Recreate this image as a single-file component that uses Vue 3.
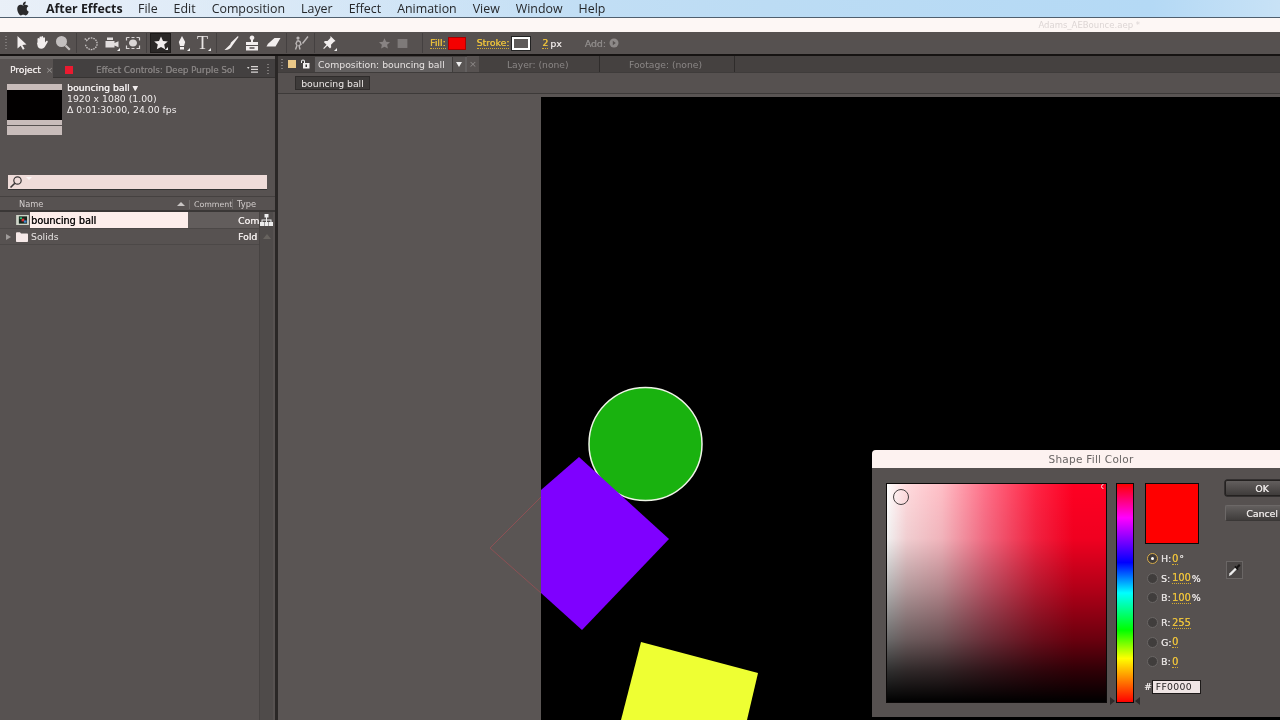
<script setup>
const menus = ['File', 'Edit', 'Composition', 'Layer', 'Effect', 'Animation', 'View', 'Window', 'Help']
const I = {
  arrow: { f: 'M4.500 1v12.500l3.200-2.800 2.200 4 1.700-.9-2.200-3.900 4.100-.4z' },
  hand: { f: 'M3.500 7.500V4c0-1.200 1.500-1.200 1.700 0l.3-1.500c0-1.300 1.700-1.300 1.800 0v-.5c.1-1.300 1.800-1.200 1.800 0l.2 1c.2-1.100 1.700-1 1.700.2v4.300l1-1.300c.9-1 2.300 0 1.600 1l-2.400 4c-.8 1.500-1.900 2.500-3.800 2.500-2.500 0-3.700-1.400-3.900-3.200L3 8z' },
  zoom: { s: 'M10.500 10.500l4.300 4.300', f: 'M6.500 1a5.500 5.500 0 1 1 0 11 5.500 5.500 0 0 1 0-11z', sw: 2.200, op: .7 },
  rotate: { s: 'M3.500 5.500a5.800 5.800 0 1 1-1 3.500M1.800 3.500l1.700 2.200 2.300-1.500', dash: '1.500 1', sw: 1.300, op: .75 },
  camera: { f: 'M1.500 6h9v2l4-1.800v6l-4-1.800v2h-9zM3 2.500h6v2.500H3z', op: .9, c: true },
  behind: { s: 'M1.500 2.500h3M11.500 2.500h3M1.500 2.500v3M14.500 2.500v3M1.500 10.500v3h3M14.500 10.500v3h-3M6.500 2.500h3M6.500 13.500h3', f: 'M8 4.500c2.500 0 4 1.600 4 3.500s-1.500 3.500-4 3.500S4 9.900 4 8s1.500-3.500 4-3.500z', sw: 1.200, op: .85 },
  star: { f: 'M8 1.500l2 4.400 4.800.5-3.600 3.200 1 4.700L8 11.900l-4.200 2.400 1-4.700L1.200 6.400 6 5.900z', c: true },
  pen: { f: 'M8 1l3.200 6-1.200 4H6L4.800 7zM6 12h4v2.500H6z', c: true },
  brush: { f: 'M15 1L8 7.500l-.8 2L1.500 15c2.800.3 6.300-1 7.500-4L15.500 2z' },
  stamp: { f: 'M8 .5a2.300 2.300 0 0 1 1 4.400V7h5v3H2V7h5V4.900A2.300 2.300 0 0 1 8 .5zM2 11h12v4.500H2zM5.500 12.300v1.500h5v-1.500z' },
  eraser: { f: 'M9.500 3h6l-5 8.500H1.500L3 8.800z' },
  roto: { s: 'M4.500 5.500l-1.500 3 1 2-1.500 4M4.500 5.500l2.500 1 1 3-2 1 1 4M15 1.500l-5.500 7', f: 'M5 1.500a1.600 1.600 0 1 1 0 3.200 1.600 1.600 0 0 1 0-3.200z', sw: 1.400, op: .65 },
  pin: { f: 'M9.500 1l5 5-1.500.8-3 3 .2 2.500-1.200 1.200-2.700-2.800L3 14l-.8-.8 3.300-3.400L2.800 7.100 4 5.900l2.500.2 2.900-3z', c: true },
  starDim: { f: 'M8 1.500l2 4.400 4.800.5-3.600 3.200 1 4.700L8 11.900l-4.200 2.400 1-4.700L1.200 6.400 6 5.900z', op: .32 },
  boxDim: { f: 'M2 2.500h12v11H2z', op: .26 }
}
const groups = [
  [I.arrow, I.hand, I.zoom],
  [I.rotate, I.camera, I.behind],
  [{ ...I.star, sel: true }, I.pen, { t: 'T', c: true }],
  [I.brush, I.stamp, I.eraser],
  [I.roto],
  [I.pin]
]
const hsb = [
  { k: 'H:', v: '0', u: '°', on: true, cls: 'f-h' },
  { k: 'S:', v: '100', u: '%', cls: 'f-s' },
  { k: 'B:', v: '100', u: '%', cls: 'f-b' },
  { k: 'R:', v: '255', u: '', cls: 'f-r' },
  { k: 'G:', v: '0', u: '', cls: 'f-g' },
  { k: 'B:', v: '0', u: '', cls: 'f-b2' }
]
</script>

<template>
  <div class="app">
    <header class="menubar">
      <svg class="apple" viewBox="0 0 16 16"><path d="M11.180 0C9.900.1 8.800.9 8.300 1.800c-.5.800-.6 1.700-.5 2.300 1.200.1 2.300-.6 2.800-1.500.5-.8.700-1.700.6-2.600zM14.500 11.700c-1.500-.7-2.200-1.900-2.200-3.300 0-1.300.7-2.300 1.800-3-.7-1-1.800-1.500-3-1.600-1.300-.1-2.400.7-3 .7-.7 0-1.700-.7-2.900-.7C3.300 3.800 1.400 5.400 1.400 8.400c0 3.100 2.200 7.500 4.200 7.500 1 0 1.400-.7 2.700-.7s1.600.7 2.700.7c1.700 0 3-2.500 3.500-4.200z"/></svg>
      <strong class="app-name">After Effects</strong>
      <span v-for="m in menus" :key="m" class="menu">{{ m }}</span>
    </header>
    <div class="titlebar"><span>Adams_AEBounce.aep *</span></div>

    <div class="toolbar">
      <i class="grip"></i>
      <template v-for="(g, gi) in groups" :key="gi">
        <i v-if="gi" class="sep"></i>
        <div v-for="(t, ti) in g" :key="ti" class="tool" :class="{ sel: t.sel, corner: t.c }">
          <span v-if="t.t" class="tool-t">{{ t.t }}</span>
          <svg v-else viewBox="0 0 16 16" :style="{ opacity: t.op || 1 }">
            <path v-if="t.f" :d="t.f" fill="#f2eeee"/>
            <path v-if="t.s" :d="t.s" fill="none" stroke="#f2eeee" :stroke-width="t.sw" :stroke-dasharray="t.dash"/>
          </svg>
        </div>
      </template>
      <div class="dim">
        <div class="tool dimtool"><svg viewBox="0 0 16 16" :style="{ opacity: I.starDim.op }"><path :d="I.starDim.f" fill="#f2eeee"/></svg></div>
        <div class="tool dimtool"><svg viewBox="0 0 16 16" :style="{ opacity: I.boxDim.op }"><path :d="I.boxDim.f" fill="#f2eeee"/></svg></div>
      </div>
      <i class="sep sep-fill"></i>
      <span class="link">Fill:</span>
      <i class="fill-swatch"></i>
      <span class="link stroke-l">Stroke:</span>
      <i class="stroke-swatch"></i>
      <span class="link px-v">2</span><span class="px-u">px</span>
      <span class="add">Add:</span>
      <svg class="add-i" viewBox="0 0 10 10"><circle cx="5" cy="5" r="4.500" fill="#8d8988"/><path d="M3.800 2.800L6.800 5l-3 2.200z" fill="#575251"/></svg>
    </div>

    <div class="work">
      <aside class="left">
        <div class="tabs-l">
          <div class="tab-project"><span>Project</span><em>×</em></div>
          <i class="red-sq"></i>
          <span class="tab-fx">Effect Controls: Deep Purple Sol</span>
          <svg class="panel-menu" viewBox="0 0 11 7"><path d="M0 1h2.500L1.250 3zM4 0h7v1.200H4zM4 2.800h7V4H4zM4 5.600h7v1.200H4z" fill="#d8d4d3"/></svg>
          <i class="grip grip-tab"></i>
        </div>
        <div class="info">
          <div class="thumb"><i class="t1"></i><i class="t2"></i><i class="t3"></i><i class="t4"></i></div>
          <div class="meta">
            <b>bouncing ball <small>▾</small></b>
            <span>1920 x 1080 (1.00)</span>
            <span>Δ 0:01:30:00, 24.00 fps</span>
          </div>
        </div>
        <div class="search">
          <svg viewBox="0 0 14 14"><circle cx="8.500" cy="5.500" r="3.700" fill="none" stroke="#3c3838" stroke-width="1.200"/><path d="M5.800 8.200L1.500 12.500" stroke="#3c3838" stroke-width="1.600"/></svg>
          <i></i>
        </div>
        <div class="cols">
          <span class="c-name">Name</span>
          <i class="sort"></i>
          <span class="c-comment">Comment</span>
          <span class="c-type">Type</span>
        </div>
        <div class="list">
          <div class="rows">
            <div class="row row-sel">
              <svg class="comp-i" viewBox="0 0 14 11"><rect width="14" height="11" fill="#cfd4c8"/><rect x="3" y="1.500" width="9" height="8" fill="#14241c"/><rect x="6" y="4" width="3" height="3" fill="#d33"/><rect x="4" y="2.500" width="2.500" height="2" fill="#3b7"/><rect x="8.500" y="6" width="3" height="2.500" fill="#48c"/></svg>
              <span class="sel-name">bouncing ball</span>
              <span class="type">Com</span>
            </div>
            <div class="row row-two">
              <i class="tri"></i>
              <svg class="folder" viewBox="0 0 12 10"><path d="M0 1.500C0 .7.500.3 1 .3h3l1 1.200h6c.6 0 1 .4 1 1V9c0 .6-.4 1-1 1H1c-.6 0-1-.4-1-1z" fill="#f6e9e8"/></svg>
              <span class="solids">Solids</span>
              <span class="type">Fold</span>
            </div>
          </div>
          <div class="scroll">
            <svg class="flow" viewBox="0 0 13 12"><path d="M4.500 0h4v3.500h-4zM6 3.500h1V5.500h4.500V8h-1V6.500H7V8H6V6.500H2.500V8h-1V5.500H6zM0 8h4v4H0zM4.500 8h4v4h-4zM9 8h4v4H9z" fill="#eee"/></svg>
            <i class="up"></i>
          </div>
        </div>
      </aside>

      <main class="right">
        <div class="tabs-r">
          <i class="grip grip-tab2"></i>
          <i class="y-sq"></i>
          <svg class="lock" viewBox="0 0 10 10"><path d="M1 2.500a2 2 0 0 1 4 0V4H4V2.500a1 1 0 0 0-2 0V4H1z" fill="#eee"/><rect x="3" y="4" width="6.500" height="5.500" fill="#f3f0ef"/><rect x="5.500" y="5.500" width="1.500" height="2.500" fill="#333"/></svg>
          <div class="comp-tab">Composition: bouncing ball<i><s></s></i></div>
          <em class="x">×</em>
          <div class="other-tabs">
            <span class="tab-layer">Layer: (none)</span>
            <span class="tab-foot">Footage: (none)</span>
          </div>
        </div>
        <div class="crumbs"><span>bouncing ball</span></div>
        <div class="viewer">
          <div class="comp"></div>
          <svg class="art" viewBox="278 94 1002 626">
            <circle cx="645.500" cy="444" r="56.500" fill="#19b20f" stroke="#eef5e6" stroke-width="1.500"/>
            <path d="M541 490L579 457 669 539 582 630 541 593z" fill="#7f00ff"/>
            <path d="M541 497L490 548 541 593" fill="none" stroke="#8c5054" stroke-width="1"/>
            <path d="M641 642L758 673 747 720 621 720z" fill="#eeff33"/>
          </svg>
        </div>
      </main>
    </div>

    <section class="dialog">
      <div class="d-title">Shape Fill Color</div>
      <div class="d-body">
        <div class="field"><i class="cursor"></i><i class="corner-mark"></i></div>
        <div class="hue"><i class="h-l"></i><i class="h-r"></i></div>
        <div class="values">
          <div class="swatch"></div>
          <div v-for="r in hsb" :key="r.cls" class="val" :class="r.cls">
            <i class="radio" :class="{ on: r.on }"></i>
            <span class="k">{{ r.k }}</span>
            <span class="link v">{{ r.v }}</span>
            <span class="u">{{ r.u }}</span>
          </div>
          <div class="hex"><span>#</span><div>FF0000</div></div>
        </div>
        <div class="actions">
          <button class="btn ok">OK</button>
          <button class="btn cancel">Cancel</button>
          <div class="dropper">
            <svg viewBox="0 0 16 16"><path d="M2 14.500l.8-3L9 5.300l1.700 1.700-6.200 6.200z" fill="#eee"/><path d="M9 3.500l1 1 2.200-2.500c1-.8 2.600.7 1.800 1.800l-2.500 2.200 1 1-1.300 1.200-3.400-3.400z" fill="#161414"/></svg>
          </div>
        </div>
      </div>
    </section>
  </div>
</template>

<style>
html, body { margin: 0; background: #575251; }
</style>

<style scoped>
.app { position: relative; width: 1280px; height: 720px; overflow: hidden; display: flex; flex-direction: column; background: #575251; font-family: "DejaVu Sans", sans-serif; font-size: 9.300px; color: #eee9e8; filter: blur(.35px); }
i, em { font-style: normal; display: block; }
.menubar { height: 18px; flex: none; display: flex; align-items: center; box-sizing: border-box; border-bottom: 1px solid #4f5f6e; padding-left: 16px; background: linear-gradient(90deg, rgba(240,243,248,.75), rgba(240,243,248,0) 45%), linear-gradient(90deg, #d4e6f7, #bcdcf4 60%, #b4d9f5 90%, #c8e2f6); font-family: "Open Sans", sans-serif; font-size: 12.400px; color: #25272a; }
.apple { width: 14px; height: 15px; fill: #2a2a2c; }
.app-name { margin: 0 9px 0 16px; font-weight: 700; width: 75px; white-space: nowrap; color: #1c1d20; }
.menu { margin: 0 8px; white-space: nowrap; }
.titlebar { height: 14px; flex: none; background: #fdf7f5; position: relative; display: flex; align-items: center; justify-content: flex-end; padding-right: 140px; font-size: 8.500px; color: #dcd5d4; }
.toolbar { height: 22px; flex: none; display: flex; align-items: center; background: #565150; border-bottom: 2px solid #161312; box-sizing: content-box; }
.grip { width: 2px; height: 14px; flex: none; background: repeating-linear-gradient(#7d7978 0 1px, transparent 1px 3px); margin: 0 3px 0 5px; }
.sep { width: 1px; height: 20px; margin: 0 3px; background: #444040; flex: none; }
.tool { width: 21px; height: 20px; flex: none; display: flex; align-items: center; justify-content: center; position: relative; box-sizing: border-box; }
.tool svg { width: 16px; height: 16px; }
.tool.corner::after { content: ""; position: absolute; right: 2px; bottom: 2px; border: solid transparent; border-width: 0 0 3px 3px; border-bottom-color: #eee; }
.tool.sel { background: #2b2827; border: 1px solid #1f1c1b; }
.tool-t { font-family: "Liberation Serif", serif; font-size: 18px; color: #e8e4e3; line-height: 1; }
.dim { display: flex; margin-left: 36px; }
.dimtool { width: 18.500px; }
.dimtool svg { width: 13px; height: 13px; }
.sep-fill { margin: 0 7px 0 10px; }
.link { color: #e8bf3c; border-bottom: 1px dotted #d5ac30; text-shadow: .35px 0 currentColor; line-height: 11px; }
.fill-swatch { width: 18px; height: 13px; margin-left: 2px; background: #f40000; border: 1px solid #a00; box-sizing: border-box; }
.stroke-l { margin-left: 11px; }
.stroke-swatch { width: 18px; height: 13px; margin-left: 3px; border: 2px solid #fff; background: #5f5b5a; box-shadow: 0 0 0 1px #222; box-sizing: border-box; }
.px-v { margin-left: 12px; }
.px-u { margin-left: 2px; text-shadow: .35px 0 currentColor; color: #e2dddc; }
.add { margin-left: 23px; color: #8d8988; text-shadow: .35px 0 currentColor; }
.add-i { width: 10px; height: 10px; margin-left: 3px; }

.work { flex: 1; min-height: 0; display: flex; }
.left { width: 275px; flex: none; border-right: 3px solid #2a2726; box-sizing: content-box; display: flex; flex-direction: column; position: relative; }
.tabs-l { height: 22px; flex: none; box-sizing: border-box; background: linear-gradient(#6b6766 0 3px, #434040 3px); display: flex; align-items: center; border-bottom: 1px solid #363332; }
.tab-project { width: 53px; height: 19px; margin-top: 3px; background: #575251; display: flex; align-items: center; padding: 3px 0 0 10px; box-sizing: border-box; font-size: 9px; text-shadow: .35px 0 currentColor; }
.tab-project em { margin-left: 5px; color: #9a9695; text-shadow: none; }
.red-sq { width: 8px; height: 8px; margin: 6px 0 0 12px; background: #ea1a30; }
.tab-fx { margin: 6px 0 0 23px; color: #858180; white-space: nowrap; width: 151px; text-shadow: .3px 0 currentColor; font-size: 8.700px; }
.panel-menu { width: 11px; height: 7px; margin: 5px 0 0 0; }
.grip-tab { height: 10px; margin: 5px 0 0 9px; }
.info { display: flex; height: 97px; padding: 6px 0 0 7px; box-sizing: border-box; flex: none; }
.thumb { width: 55px; height: 51px; display: flex; flex-direction: column; }
.t1 { height: 6px; background: #c8bcba; }
.t2 { height: 30px; background: #020000; }
.t3 { height: 5px; background: #c8bcba; margin-bottom: 1px; }
.t4 { height: 9px; background: #c8bcba; }
.meta { margin: -2px 0 0 5px; display: flex; flex-direction: column; line-height: 11px; white-space: nowrap; color: #f1eded; }
.meta b { font-weight: 400; text-shadow: .35px 0 currentColor; }
.meta small { font-size: 10px; }
.search { height: 14px; margin: 0 8px; background: #efdcd9; flex: none; display: flex; align-items: center; padding-left: 1px; box-shadow: 0 1px 0 #333; }
.search svg { width: 14px; height: 14px; }
.search i { width: 0; height: 0; margin: -5px 0 0 3px; border: 3px solid transparent; border-top-color: #fbf6f5; }
.cols { margin-top: 7px; flex: none; display: flex; align-items: center; font-size: 8.300px; color: #d2cdcc; border-top: 1px solid #454140; border-bottom: 2px solid #3a3736; padding-top: 1px; box-sizing: content-box; height: 12px; }
.c-name { margin-left: 19px; width: 158px; }
.sort { width: 0; height: 0; border: 4px solid transparent; border-top: 0; border-bottom-color: #c9c5c4; }
.c-comment { margin-left: 4px; padding-left: 4px; border-left: 1px solid #6e6a69; width: 38px; font-size: 7.800px; white-space: nowrap; }
.c-type { padding-left: 4px; border-left: 1px solid #6e6a69; }
.list { flex: 1; min-height: 0; display: flex; }
.rows { width: 259px; flex: none; }
.row { height: 17px; display: flex; align-items: center; position: relative; border-bottom: 1px solid #4c4847; box-sizing: border-box; white-space: nowrap; }
.row-two { height: 16px; }
.row-sel { background: linear-gradient(90deg, #575251 0 188px, #625d5c 188px); }
.comp-i { width: 13px; height: 10px; margin-left: 16px; }
.sel-name { margin-left: 1px; background: #fdeeeb; width: 158px; height: 16px; line-height: 17px; font-size: 9.700px; color: #131111; padding-left: 1px; box-sizing: border-box; text-shadow: .3px 0 currentColor; }
.type { position: absolute; left: 238px; color: #eee9e8; text-shadow: .3px 0 currentColor; }
.tri { width: 0; height: 0; margin-left: 6px; border: 3.500px solid transparent; border-right: 0; border-left: 5px solid #a09c9b; }
.folder { width: 12px; height: 10px; margin-left: 5px; }
.solids { margin-left: 3px; color: #e8e4e3; }
.scroll { width: 13px; position: relative; background: #4f4b4a; border-left: 1px solid #474342; }
.flow { position: absolute; left: 0; top: 2px; width: 13px; height: 12px; }
.up { position: absolute; left: 3px; top: 22px; width: 0; height: 0; border: 4px solid transparent; border-top: 0; border-bottom: 5px solid #67635f; }

.right { flex: 1; min-width: 0; display: flex; flex-direction: column; }
.tabs-r { height: 16px; flex: none; display: flex; align-items: center; background: #454140; }
.grip-tab2 { height: 10px; margin: 0 0 0 3px; }
.y-sq { width: 8px; height: 8px; margin-left: 5px; background: #ecc988; }
.lock { width: 10px; height: 10px; margin-left: 4px; }
.comp-tab { margin-left: 5px; width: 152px; height: 15px; line-height: 16px; background: #636060; padding-left: 3px; box-sizing: border-box; position: relative; color: #e6e2e1; white-space: nowrap; }
.comp-tab i { position: absolute; right: 2px; top: 0; width: 13px; height: 15px; background: #595554; border-left: 1px solid #403d3c; box-sizing: border-box; }
.comp-tab s { position: absolute; left: 3px; top: 5px; width: 0; height: 0; border: 3.500px solid transparent; border-bottom: 0; border-top: 5px solid #eee; }
.x { width: 12px; text-align: center; color: #8f8b8a; height: 16px; line-height: 15px; background: #575251; }
.other-tabs { flex: 1; display: flex; height: 16px; align-items: center; color: #8a8685; font-size: 9.200px; }
.tab-layer { width: 121px; box-sizing: border-box; height: 16px; line-height: 17px; padding-left: 28px; border-right: 1px solid #2f2c2b; }
.tab-foot { width: 135px; box-sizing: border-box; height: 16px; line-height: 17px; padding-left: 29px; border-right: 1px solid #2f2c2b; }
.crumbs { height: 22px; flex: none; box-sizing: border-box; border-top: 1px solid #3f3c3b; border-bottom: 1px solid #3d3a39; padding: 3px 0 0 17px; background: #565150; }
.crumbs span { display: block; width: 75px; height: 14px; line-height: 13px; background: #3e3b3a; border: 1px solid #2f2c2b; box-sizing: border-box; text-align: center; color: #ece8e7; }
.viewer { flex: 1; min-height: 0; position: relative; padding: 3px 0 0 263px; display: flex; background: #5a5554; box-sizing: border-box; }
.comp { flex: 1; background: #000; }
.art { position: absolute; left: 0; top: 0; width: 1002px; height: 626px; }

.dialog { position: absolute; left: 872px; top: 450px; width: 438px; height: 267px; background: #565150; border-radius: 4px 4px 0 0; display: flex; flex-direction: column; }
.d-title { height: 18px; flex: none; background: #fdf2f0; border-radius: 4px 4px 0 0; text-align: center; line-height: 19px; font-size: 10.500px; color: #696564; letter-spacing: .25px; }
.d-body { flex: 1; display: flex; padding: 15px 0 0 14px; align-items: flex-start; }
.field { width: 221px; height: 220px; box-sizing: border-box; border: 1px solid #0b0808; position: relative; background: linear-gradient(rgba(0,0,0,0), rgba(0,0,0,.06) 25%, rgba(0,0,0,.3) 48%, rgba(0,0,0,.58) 71%, rgba(0,0,0,.82) 86%, #000), linear-gradient(90deg, #fff, #ffdadd 9%, #ffbec6 25%, #ff6f88 45%, #ff2444 68%, #ff0022 85%); }
.cursor { position: absolute; left: 6px; top: 5px; width: 16px; height: 16px; border: 1px solid #443f3f; border-radius: 50%; box-sizing: border-box; }
.corner-mark { position: absolute; right: 0; top: 0; width: 5px; height: 5px; border: 1px solid #f9d5d5; border-radius: 50%; box-sizing: border-box; clip-path: inset(0 50% 0 0); }
.hue { width: 18px; height: 220px; margin-left: 9px; box-sizing: border-box; border: 1px solid #0b0808; position: relative; background: linear-gradient(#f00, #f0f 15.500%, #00f 36%, #0ff 50%, #0f0 67%, #ff0 80%, #f00); }
.h-l, .h-r { position: absolute; bottom: -3px; width: 0; height: 0; border: 4px solid transparent; }
.h-l { left: -7px; border-right: 0; border-left: 5px solid #2e2b2a; }
.h-r { right: -7px; border-left: 0; border-right: 5px solid #2e2b2a; }
.values { width: 56px; margin-left: 11px; display: flex; flex-direction: column; position: relative; }
.swatch { width: 54px; height: 61px; background: #ff0000; border: 1px solid #0b0808; box-sizing: border-box; margin-bottom: 5px; }
.val { height: 19.600px; display: flex; align-items: center; color: #e4e0df; margin-left: 2px; white-space: nowrap; text-shadow: .3px 0 currentColor; }
.f-r { margin-top: 5px; }
.radio { width: 11px; height: 11px; border-radius: 50%; background: #403d3c; border: 1px solid #6a6665; box-sizing: border-box; margin-right: 3px; position: relative; flex: none; }
.radio.on { background: #3f3b3a; border: 1px solid #d8ad4a; }
.radio.on::after { content: ""; position: absolute; left: 3px; top: 3px; width: 3px; height: 3px; border-radius: 50%; background: #fff; }
.k { width: 11px; flex: none; }
.v { line-height: 11px; font-size: 9.800px; }
.u { margin-left: 1px; }
.hex { display: flex; align-items: center; margin: 8px 0 0 -1px; text-shadow: .3px 0 currentColor; }
.hex div { width: 49px; height: 14px; margin-left: 0; background: #efe5e4; border: 1px solid #1d1a19; box-sizing: border-box; color: #2a2727; line-height: 12px; padding-left: 3px; letter-spacing: .3px; text-shadow: none; }
.actions { margin-left: 24px; display: flex; flex-direction: column; align-items: flex-start; margin-top: -3px; }
.btn { width: 74px; height: 16px; padding: 0; font: 9.300px "DejaVu Sans", sans-serif; text-shadow: .3px 0 currentColor; color: #e6e2e1; box-sizing: border-box; background: linear-gradient(#635f5e, #3f3c3b); border: 1px solid #242120; border-radius: 2px; }
.ok { box-shadow: 0 0 0 .5px #111; }
.cancel { margin-top: 9px; border-color: #6c6867 #3a3736 #3a3736 #6c6867; }
.dropper { width: 17px; height: 18px; margin: 40px 0 0 1px; background: #4b4746; border: 1px solid #6a6665; box-sizing: border-box; display: flex; }
.dropper svg { width: 15px; height: 16px; }
</style>
